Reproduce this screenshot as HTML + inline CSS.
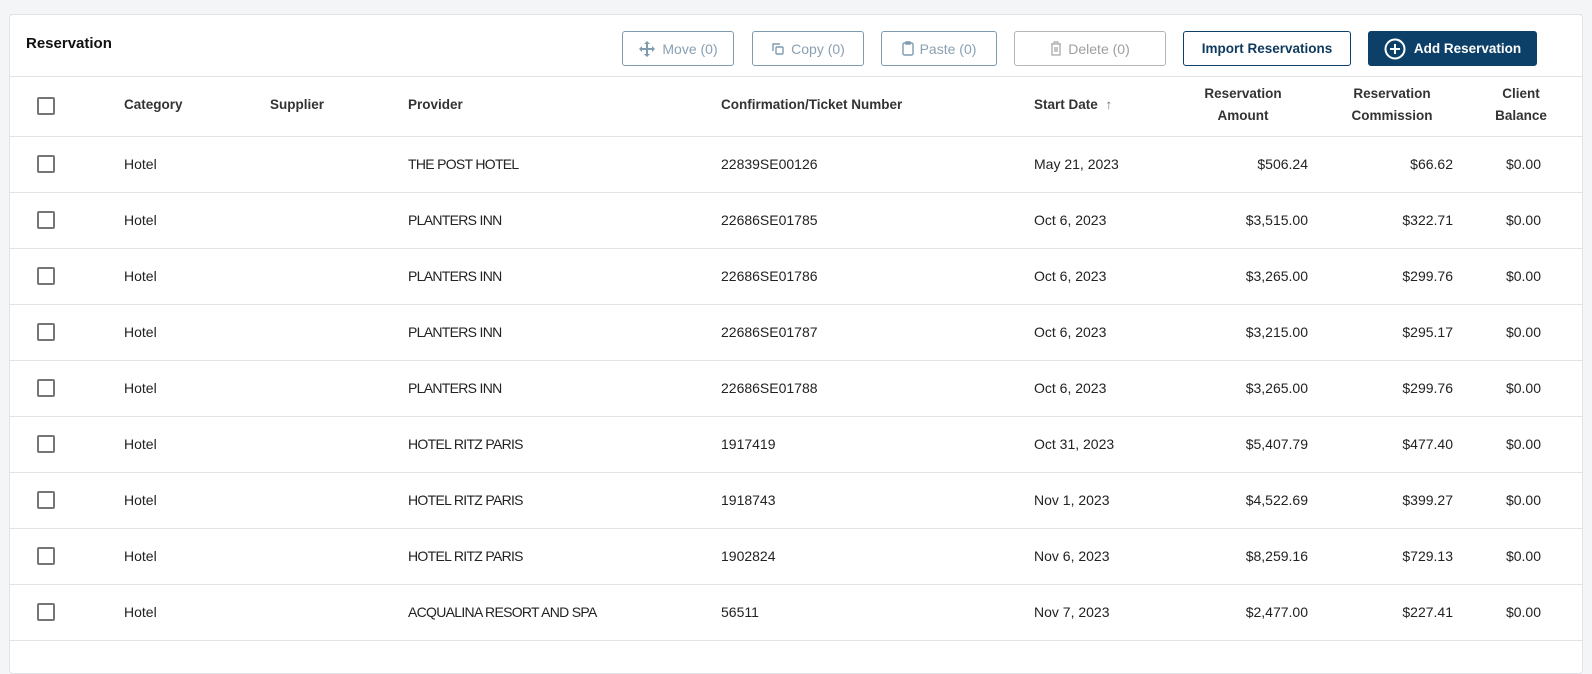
<!DOCTYPE html>
<html><head><meta charset="utf-8"><style>
*{box-sizing:border-box;margin:0;padding:0}
body{width:1592px;height:653px;background:#f4f5f7;font-family:"Liberation Sans",Arial,sans-serif;font-size:14px;color:#222;position:relative;overflow:hidden}
.card{position:absolute;left:9px;top:14px;width:1574px;height:660px;background:#fff;border:1px solid #e2e3e6;border-radius:4px}
.abs{position:absolute;white-space:nowrap}
.btn{position:absolute;top:31px;height:35px;border:1px solid #7f9bb0;border-radius:3px;color:#8aa0b2;font-size:14px;display:flex;align-items:center;justify-content:center;gap:6px;background:#fff}
.line{position:absolute;left:10px;width:1572px;height:1px;background:#e2e3e6}
.cb{position:absolute;left:37px;width:18px;height:18px;border:2px solid #757575;border-radius:2px}
.h{font-weight:bold;color:#333;font-size:13.5px}
.r{text-align:right}
.c{text-align:center;line-height:22px}
.t{line-height:20px}
.p{letter-spacing:-0.7px}
</style></head><body>
<div class="card"></div>
<div class="abs h" style="left:26px;top:35px;font-size:15px;color:#111">Reservation</div>
<div class="btn" style="left:622px;width:112px"><svg width="18" height="18" viewBox="0 0 18 18" fill="#7f9bb0"><path d="M9 1l3 3H10v4h4V6l3 3-3 3v-2h-4v4h2l-3 3-3-3h2v-4H4v2L1 9l3-3v2h4V4H6z"/></svg>Move (0)</div>
<div class="btn" style="left:752px;width:112px"><svg width="14" height="14" viewBox="0 0 14 14" fill="none" stroke="#7f9bb0" stroke-width="1.4"><path d="M2 9V2h7"/><rect x="5" y="5" width="7" height="7" rx="1"/></svg>Copy (0)</div>
<div class="btn" style="left:881px;width:116px"><svg width="12" height="15" viewBox="0 0 12 15" fill="none" stroke="#7f9bb0" stroke-width="1.4"><rect x="1" y="2" width="10" height="12" rx="1.5"/><path d="M4 1h4v2H4z"/></svg>Paste (0)</div>
<div class="btn" style="left:1014px;width:152px;border-color:#b5b5b5;color:#9e9e9e"><svg width="12" height="15" viewBox="0 0 12 15" fill="none" stroke="#a8a8a8" stroke-width="1.3"><path d="M1 3h10M4 3V1h4v2M2 3v11h8V3M5 6v5M7 6v5"/></svg>Delete (0)</div>
<div class="btn" style="left:1183px;width:168px;border-color:#0d4068;color:#0d3a5e;font-weight:bold;font-size:13.5px">Import Reservations</div>
<div class="btn" style="left:1368px;width:169px;border-color:#0d4068;background:#0d4068;color:#fff;font-weight:bold;gap:8px;font-size:13.5px"><svg width="22" height="22" viewBox="0 0 22 22" fill="none" stroke="#fff" stroke-width="2"><circle cx="11" cy="11" r="9.5"/><path d="M11 6v10M6 11h10"/></svg>Add Reservation</div>
<div class="line" style="top:76px"></div>
<div class="cb" style="top:97px"></div>
<div class="abs h t" style="left:124px;top:95px">Category</div>
<div class="abs h t" style="left:270px;top:95px">Supplier</div>
<div class="abs h t" style="left:408px;top:95px">Provider</div>
<div class="abs h t" style="left:721px;top:95px">Confirmation/Ticket Number</div>
<div class="abs h t" style="left:1034px;top:95px">Start Date <span style="color:#777;margin-left:4px">&#8593;</span></div>
<div class="abs h c" style="left:1183px;width:120px;top:83px">Reservation<br>Amount</div>
<div class="abs h c" style="left:1332px;width:120px;top:83px">Reservation<br>Commission</div>
<div class="abs h c" style="left:1481px;width:80px;top:83px">Client<br>Balance</div>
<div class="line" style="top:136px"></div>
<div id="rows"></div>
<script>
var d=[["THE POST HOTEL","22839SE00126","May 21, 2023","$506.24","$66.62"],["PLANTERS INN","22686SE01785","Oct 6, 2023","$3,515.00","$322.71"],["PLANTERS INN","22686SE01786","Oct 6, 2023","$3,265.00","$299.76"],["PLANTERS INN","22686SE01787","Oct 6, 2023","$3,215.00","$295.17"],["PLANTERS INN","22686SE01788","Oct 6, 2023","$3,265.00","$299.76"],["HOTEL RITZ PARIS","1917419","Oct 31, 2023","$5,407.79","$477.40"],["HOTEL RITZ PARIS","1918743","Nov 1, 2023","$4,522.69","$399.27"],["HOTEL RITZ PARIS","1902824","Nov 6, 2023","$8,259.16","$729.13"],["ACQUALINA RESORT AND SPA","56511","Nov 7, 2023","$2,477.00","$227.41"]];
var h="";d.forEach(function(r,i){var y=136+i*56,t=y+18;
h+='<div class="cb" style="top:'+(y+19)+'px"></div><div class="abs t" style="left:124px;top:'+t+'px">Hotel</div><div class="abs t p" style="left:408px;top:'+t+'px">'+r[0]+'</div><div class="abs t" style="left:721px;top:'+t+'px">'+r[1]+'</div><div class="abs t" style="left:1034px;top:'+t+'px">'+r[2]+'</div><div class="abs r t" style="left:1160px;width:148px;top:'+t+'px">'+r[3]+'</div><div class="abs r t" style="left:1310px;width:143px;top:'+t+'px">'+r[4]+'</div><div class="abs r t" style="left:1460px;width:81px;top:'+t+'px">$0.00</div><div class="line" style="top:'+(y+56)+'px"></div>';});
document.getElementById("rows").innerHTML=h;
</script>
</body></html>
